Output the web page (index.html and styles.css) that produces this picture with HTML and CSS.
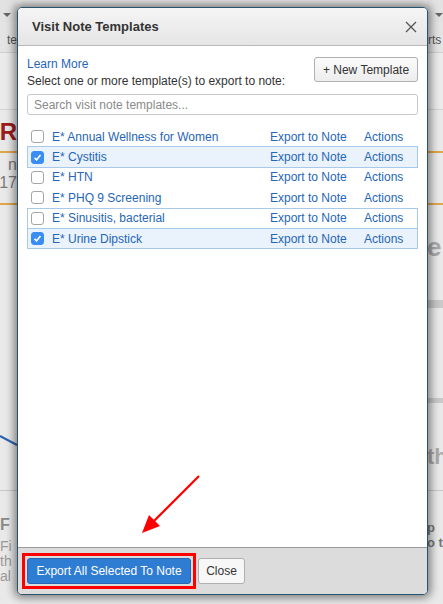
FILE: index.html
```html
<!DOCTYPE html>
<html lang="en">
    <head>
        <title>Visit Note Templates</title>
        <meta charset="utf-8">
        <link rel="stylesheet" href="styles.css">
    </head>
    <body>
        <div class="page">
            <div class="strip left">
                <div class="tool"><span class="caret"></span></div>
                <div class="tab"><span>te</span></div>
                <div class="field"></div>
                <div class="big"><span>R</span></div>
                <div class="info">
                    <span>n</span>
                    <span>17</span>
                </div>
                <div class="chart"><svg width="17" height="40" viewBox="0 0 17 40"><path d="M0 24 L17 33" stroke="#2b63b0" stroke-width="2" fill="none"/></svg></div>
                <div class="card">
                    <b>F</b>
                    <span>Fi</span>
                    <span>th</span>
                    <span>al</span>
                </div>
            </div>
            <div class="middle"></div>
            <div class="strip right">
                <div class="tool"><span class="caret"></span></div>
                <div class="tab"><span>rts</span></div>
                <div class="field"></div>
                <div class="big"></div>
                <div class="info"></div>
                <div class="letter"><span>e</span></div>
                <div class="bar"></div>
                <div class="bar low"></div>
                <div class="letter small"><span>th</span></div>
                <div class="card">
                    <b>p</b>
                    <b>o t</b>
                </div>
            </div>
        </div>

        <div class="modal">
            <div class="modal-header">
                <span class="modal-title">Visit Note Templates</span>
                <svg class="close-x" width="12" height="12" viewBox="0 0 12 12"><path d="M1 1 L11 11 M11 1 L1 11" stroke="#555" stroke-width="1.3"/></svg>
            </div>
            <div class="modal-body">
                <div class="top">
                    <div>
                        <a class="link">Learn More</a>
                        <div>Select one or more template(s) to export to note:</div>
                    </div>
                    <button class="btn">+ New Template</button>
                </div>
                <input class="search" type="text" placeholder="Search visit note templates...">
                <div class="list">
                    <div class="row">
                        <span class="check"></span>
                        <span>E* Annual Wellness for Women</span>
                        <span>Export to Note</span>
                        <span>Actions</span>
                    </div>
                    <div class="row selected">
                        <span class="check on"><svg width="9" height="9" viewBox="0 0 9 9"><path d="M1.5 4.8 L3.6 6.8 L7.5 2" stroke="#fff" stroke-width="1.6" fill="none"/></svg></span>
                        <span>E* Cystitis</span>
                        <span>Export to Note</span>
                        <span>Actions</span>
                    </div>
                    <div class="row">
                        <span class="check"></span>
                        <span>E* HTN</span>
                        <span>Export to Note</span>
                        <span>Actions</span>
                    </div>
                    <div class="row">
                        <span class="check"></span>
                        <span>E* PHQ 9 Screening</span>
                        <span>Export to Note</span>
                        <span>Actions</span>
                    </div>
                    <div class="row hover">
                        <span class="check"></span>
                        <span>E* Sinusitis, bacterial</span>
                        <span>Export to Note</span>
                        <span>Actions</span>
                    </div>
                    <div class="row selected">
                        <span class="check on"><svg width="9" height="9" viewBox="0 0 9 9"><path d="M1.5 4.8 L3.6 6.8 L7.5 2" stroke="#fff" stroke-width="1.6" fill="none"/></svg></span>
                        <span>E* Urine Dipstick</span>
                        <span>Export to Note</span>
                        <span>Actions</span>
                    </div>
                </div>
            </div>
            <div class="modal-footer">
                <span class="mark"><button class="btn primary">Export All Selected To Note</button></span>
                <button class="btn">Close</button>
            </div>
            <svg class="arrow" width="80" height="80" viewBox="0 0 80 80"><path d="M63 2 L17 48" stroke="#f00" stroke-width="2.2" fill="none"/><path d="M6 59 L13 41 L24 52 Z" fill="#f00"/></svg>
        </div>
    </body>
</html>
```
FILE: styles.css
```css
body {
    margin: 0;
    width: 443px;
    height: 604px;
    overflow: hidden;
    font: 12px "Liberation Sans", Arial, sans-serif;
    color: #333;
    background: #e9e9e9;
}
.page {
    display: flex;
    height: 604px;
}
.middle {
    flex: 1;
}
.strip {
    width: 17px;
    display: flex;
    flex-direction: column;
    overflow: hidden;
    color: #777;
}
.strip.right {
    width: 16px;
}
.strip > div {
    display: flex;
    white-space: nowrap;
    box-sizing: border-box;
}
.left > div {
    justify-content: flex-end;
}
.tool {
    height: 22px;
    background: #e2e2e2;
    align-items: center;
}
.left .tool {
    justify-content: flex-start;
    padding-left: 3px;
}
.right .tool {
    padding-left: 8px;
}
.caret {
    width: 0;
    height: 0;
    margin-top: 7px;
    border-left: 4px solid transparent;
    border-right: 4px solid transparent;
    border-top: 4px solid #666;
}
.tab {
    height: 31px;
    align-items: center;
    background: #e4e4e4;
    border-bottom: 1px solid #cfcfcf;
    font-size: 12px;
    color: #555;
    padding-top: 6px;
}
.right .tab {
    padding-left: 1px;
}
.field {
    height: 57px;
    background: #ebebeb;
    border-bottom: 1px solid #d3d3d3;
}
.big {
    height: 43px;
    align-items: center;
    font-size: 24px;
    font-weight: bold;
    color: #9b1c1c;
    border-bottom: 2px solid #e0a64a;
    padding-top: 2px;
}
.info {
    height: 52px;
    flex-direction: column;
    align-items: flex-end;
    font-size: 16px;
    color: #7a7a7a;
    line-height: 18px;
    border-bottom: 2px solid #e0a64a;
}
.left .info {
    justify-content: center;
    padding-bottom: 8px;
}
.chart {
    height: 286px;
    align-items: flex-end;
    border-bottom: 1px solid #c8c8c8;
    padding-bottom: 38px;
}
.card {
    flex: 1;
    flex-direction: column;
    padding-top: 26px;
    font-size: 14px;
    color: #999;
    line-height: 15px;
}
.left .card {
    justify-content: flex-start;
}
.card b {
    color: #8a8a8a;
    font-size: 16px;
    margin-bottom: 7px;
}
.right .card {
    padding-top: 29px;
}
.right .card b {
    margin-bottom: 0;
    font-size: 13px;
    color: #777;
}
.letter {
    height: 62px;
    align-items: flex-end;
    font-size: 26px;
    font-weight: bold;
    color: #aaa;
    padding-bottom: 4px;
}
.letter.small {
    height: 88px;
    font-size: 22px;
    padding-bottom: 20px;
    border-bottom: 1px solid #c8c8c8;
}
.bar {
    height: 0;
    border-top: 8px solid #c9c9c9;
    margin-top: 33px;
}
.bar.low {
    border-top-width: 5px;
    margin-top: 90px;
}

.modal {
    position: absolute;
    left: 17px;
    top: 7px;
    width: 409px;
    height: 586px;
    border: 1px solid #27536d;
    border-radius: 5px;
    box-shadow: 0 0 9px 3px rgba(0, 0, 0, 0.45);
    background: #fff;
    display: flex;
    flex-direction: column;
    overflow: hidden;
}
.modal-header {
    height: 37px;
    display: flex;
    align-items: center;
    justify-content: space-between;
    padding: 0 10px 0 14px;
    background: linear-gradient(#f5f5f5, #e5e5e5);
    border-bottom: 1px solid #b8b8b8;
}
.modal-title {
    font-size: 13px;
    font-weight: bold;
    color: #333;
}
.modal-body {
    flex: 1;
    padding: 10px 9px 0 9px;
    color: #333;
}
.top {
    display: flex;
    justify-content: space-between;
    align-items: flex-start;
    line-height: 17px;
}
.link {
    color: #1f64b8;
}
.btn {
    font: 12px "Liberation Sans", Arial, sans-serif;
    color: #333;
    background: linear-gradient(#fbfbfb, #ededed);
    border: 1px solid #b0b0b0;
    border-radius: 3px;
    height: 26px;
    padding: 0 10px;
    white-space: nowrap;
}
.top .btn {
    margin-top: 1px;
    width: 104px;
    height: 25px;
    padding: 0;
}
.search {
    display: block;
    box-sizing: border-box;
    width: 100%;
    height: 21px;
    margin: 4px 0 0;
    padding: 0 6px;
    border: 1px solid #c8c8c8;
    border-radius: 3px;
    font: 12px "Liberation Sans", Arial, sans-serif;
}
.search::placeholder {
    color: #8a8a8a;
}
.list {
    margin-top: 12px;
    color: #2566b6;
}
.row {
    display: grid;
    grid-template-columns: 13px 210px 86px auto;
    column-gap: 8px;
    align-items: center;
    height: 19.4px;
    padding-left: 3px;
    border: 1px solid transparent;
    margin-top: -1px;
}
.row.hover {
    border-color: #a9c9ea;
}
.row.selected {
    border-color: #a9c9ea;
    background: #eaf2fb;
    position: relative;
}
.check {
    width: 11px;
    height: 11px;
    border: 1px solid #a5a5a5;
    border-radius: 3px;
    background: #fff;
    display: flex;
    align-items: center;
    justify-content: center;
}
.check.on {
    background: #3a8ef3;
    border-color: #3a8ef3;
}
.modal-footer {
    height: 47px;
    box-sizing: border-box;
    display: flex;
    align-items: center;
    gap: 2px;
    padding: 0 4px;
    background: #dcdcdc;
    border-top: 1px solid #9a9a9a;
}
.mark {
    display: flex;
    padding: 2px;
    border: 3px solid #f00;
}
.btn.primary {
    width: 164px;
    padding: 0;
    color: #fff;
    background: #2f7dd3;
    border-color: #2766b3;
}
.mark + .btn {
    width: 47px;
    padding: 0;
    background: #f7f7f7;
}
.arrow {
    position: absolute;
    left: 118px;
    top: 466px;
}
```
